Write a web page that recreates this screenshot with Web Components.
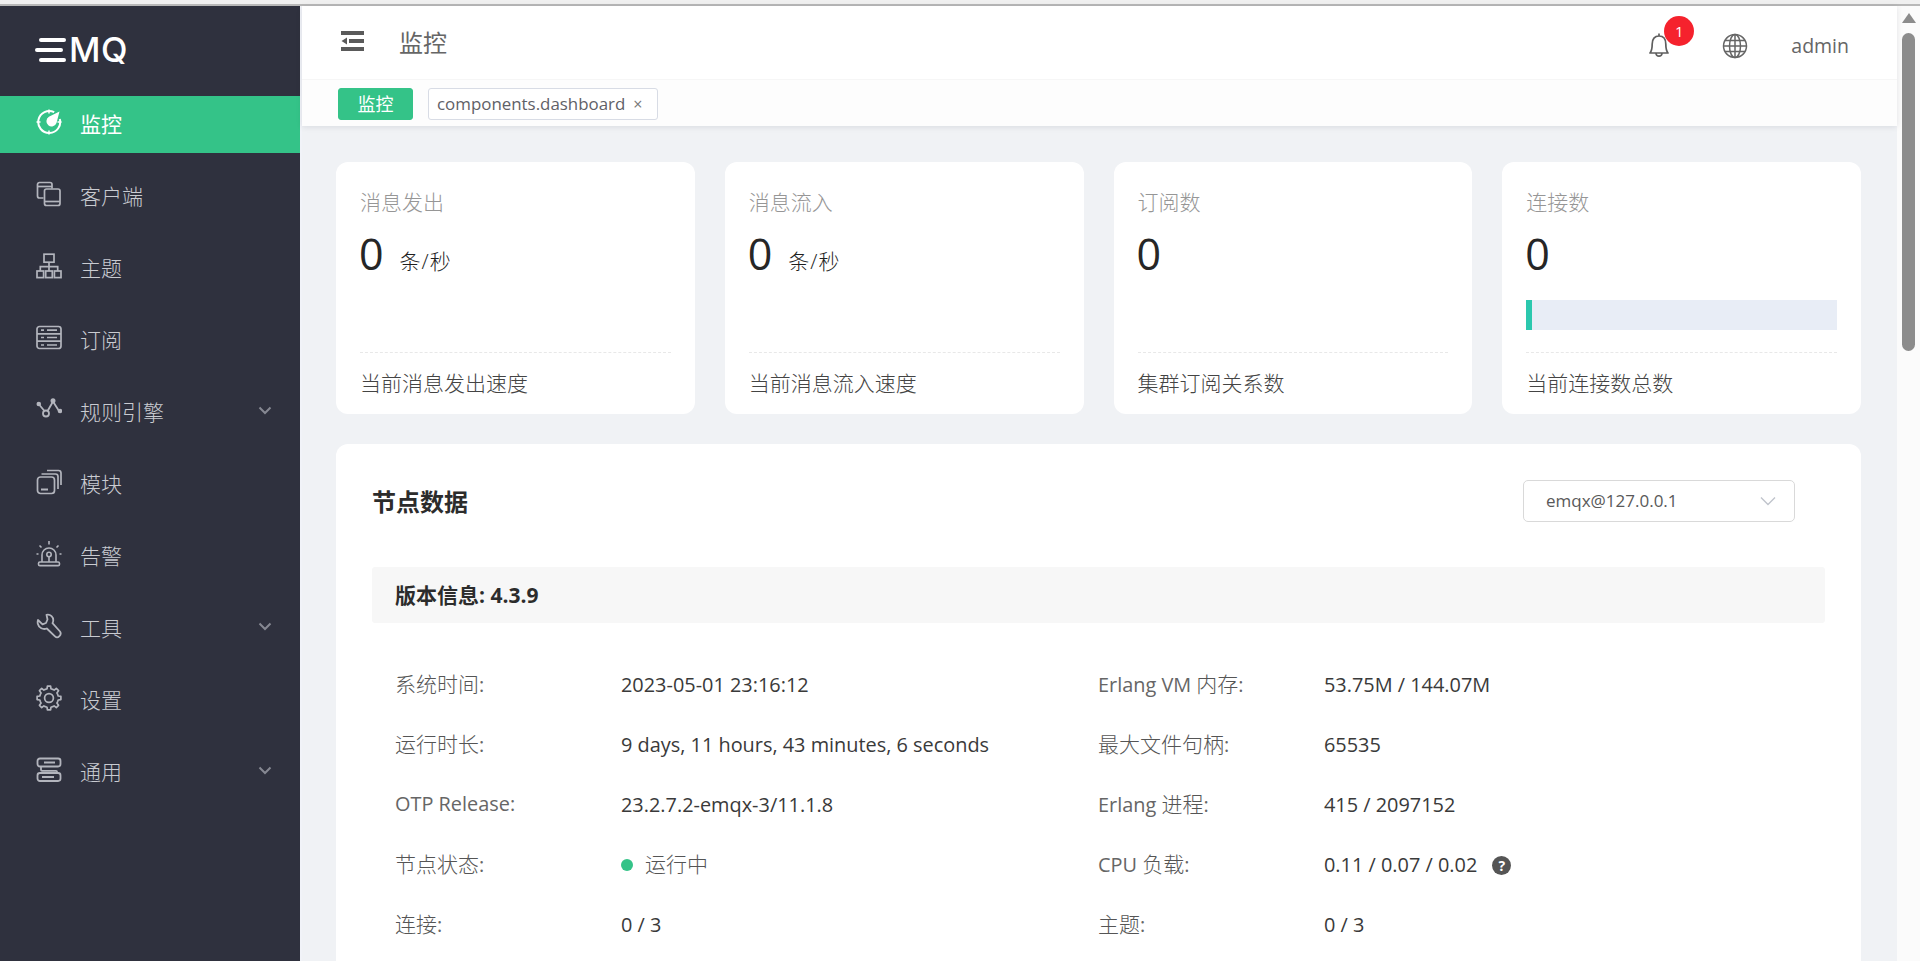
<!DOCTYPE html>
<html lang="zh">
<head>
<meta charset="utf-8">
<title>EMQ Dashboard</title>
<style>
html,body{margin:0;padding:0;height:961px;overflow:hidden;background:#fff;font-family:"Open Sans","Noto Sans CJK SC",sans-serif}
emq-app{display:block}
</style>
</head>
<body>
<emq-app>
  <emq-sidebar slot="side">
    <emq-nav active icon="monitor">监控</emq-nav>
    <emq-nav icon="client">客户端</emq-nav>
    <emq-nav icon="topic">主题</emq-nav>
    <emq-nav icon="sub">订阅</emq-nav>
    <emq-nav icon="rule" chevron>规则引擎</emq-nav>
    <emq-nav icon="module">模块</emq-nav>
    <emq-nav icon="alarm">告警</emq-nav>
    <emq-nav icon="tool" chevron>工具</emq-nav>
    <emq-nav icon="gear">设置</emq-nav>
    <emq-nav icon="general" chevron>通用</emq-nav>
  </emq-sidebar>
  <emq-header slot="head" title-text="监控" user="admin"></emq-header>
  <emq-tabs slot="head">
    <emq-tab active>监控</emq-tab>
    <emq-tab closable>components.dashboard</emq-tab>
  </emq-tabs>
  <emq-stats>
    <emq-stat label="消息发出" value="0" unit="条/秒" foot="当前消息发出速度"></emq-stat>
    <emq-stat label="消息流入" value="0" unit="条/秒" foot="当前消息流入速度"></emq-stat>
    <emq-stat label="订阅数" value="0" foot="集群订阅关系数"></emq-stat>
    <emq-stat label="连接数" value="0" foot="当前连接数总数" progress></emq-stat>
  </emq-stats>
  <emq-panel heading="节点数据" node="emqx@127.0.0.1" version="版本信息: 4.3.9">
    <emq-row label="系统时间:">2023-05-01 23:16:12</emq-row>
    <emq-row label="Erlang VM 内存:">53.75M / 144.07M</emq-row>
    <emq-row label="运行时长:">9 days, 11 hours, 43 minutes, 6 seconds</emq-row>
    <emq-row label="最大文件句柄:">65535</emq-row>
    <emq-row label="OTP Release:">23.2.7.2-emqx-3/11.1.8</emq-row>
    <emq-row label="Erlang 进程:">415 / 2097152</emq-row>
    <emq-row label="节点状态:" status>运行中</emq-row>
    <emq-row label="CPU 负载:" help>0.11 / 0.07 / 0.02</emq-row>
    <emq-row label="连接:">0 / 3</emq-row>
    <emq-row label="主题:">0 / 3</emq-row>
  </emq-panel>
</emq-app>
<script>
const FONT='"Open Sans","Noto Sans CJK SC",sans-serif';
function gearPath(cx,cy,ro,ri,n){
  let d='';
  const st=Math.PI*2/n;
  for(let i=0;i<n;i++){
    const a=i*st-Math.PI/2;
    const pts=[[ri,a-st*.5],[ri,a-st*.27],[ro,a-st*.17],[ro,a+st*.17],[ri,a+st*.27]];
    pts.forEach((p,j)=>{d+=(i===0&&j===0?'M':'L')+(cx+p[0]*Math.cos(p[1])).toFixed(2)+' '+(cy+p[0]*Math.sin(p[1])).toFixed(2)+' ';});
  }
  return d+'Z';
}
const ICONS={
monitor:`<g fill="none" stroke="currentColor" stroke-width="2"><path d="M18.2 3.2A11 11 0 1 0 23.8 10"/><path d="M13 0.5v4M13 21.5v4M0.5 13h4M21.5 13h4" stroke-width="1.5"/></g><path d="M23.5 2.5 20.5 14a5.2 5.2 0 1 1-7.6-6.2Z" fill="currentColor"/>`,
client:`<g fill="none" stroke="currentColor" stroke-width="1.7"><path d="M7.5 17H3.5A2 2 0 0 1 1.5 15V3.5A2 2 0 0 1 3.5 1.5H14A2 2 0 0 1 16 3.5V7.5"/><path d="M1.5 5.5H16"/><rect x="8.5" y="8" width="15.5" height="16.5" rx="2"/><path d="M8.5 20.5H24"/></g>`,
topic:`<g fill="none" stroke="currentColor" stroke-width="1.7"><rect x="8" y="1.2" width="10" height="8" /><rect x="1" y="18" width="6.6" height="6.6" /><rect x="9.7" y="18" width="6.6" height="6.6" /><rect x="18.4" y="18" width="6.6" height="6.6" /><path d="M13 9.2V18M4.3 18V13.6H21.7V18"/></g>`,
sub:`<g fill="none" stroke="currentColor" stroke-width="1.7"><rect x="1" y="1.5" width="24" height="22" rx="2.5"/><path d="M1 8.8H25M1 16.2H25M5 5.2H8M11 5.2H21M5 12.5H8M11 12.5H21M5 20H8M11 20H21"/></g>`,
rule:`<g fill="none" stroke="currentColor" stroke-width="1.8"><path d="M3 7.5 8.5 14M11.3 14.5 17 4.5 23 14"/><circle cx="10" cy="16.5" r="3"/></g><circle cx="2.8" cy="7" r="2.3" fill="currentColor"/><circle cx="17" cy="3.8" r="2.5" fill="currentColor"/><circle cx="24" cy="14" r="2.3" fill="currentColor"/>`,
module:`<g fill="none" stroke="currentColor" stroke-width="1.7"><rect x="1.5" y="8" width="17" height="16.5" rx="3"/><path d="M5.5 5H19.5A2.5 2.5 0 0 1 22 7.5V20"/><path d="M11 1.5H22.5A2.5 2.5 0 0 1 25 4V16"/><path d="M5 20.5H12" stroke-width="2"/></g>`,
alarm:`<g fill="none" stroke="currentColor" stroke-width="1.6"><path d="M6 21V14A7 7 0 0 1 20 14V21"/><rect x="2.5" y="21" width="21" height="3.6" rx="1.4"/><circle cx="13" cy="13.5" r="2.2"/><path d="M13 15.7V21M13 0V3.5M3.5 4.5 5.5 6.5M22.5 4.5 20.5 6.5M0.5 13H2.5M23.5 13H25.5"/></g>`,
tool:`<path fill="none" stroke="currentColor" stroke-width="1.8" stroke-linejoin="round" d="M10.5 1.8C14.5 1 17.7 4 17.2 8C17.1 8.9 16.9 9.5 16.5 10.2L24 18.5C25 20 24.6 22 23.4 23.2C22 24.6 20.2 24.6 19 23.4L10.8 15.5C7 17 2.8 15 1.8 10.8C1.5 9.5 1.6 8.4 2 7L6.5 11.3L10 10L11.5 6.5Z"/>`,
gear:`<g fill="none" stroke="currentColor" stroke-width="1.7" stroke-linejoin="round"><path d="${gearPath(13,13,12,9.4,8)}"/><circle cx="13" cy="13" r="4.4"/></g>`,
general:`<g fill="none" stroke="currentColor" stroke-width="1.8"><rect x="1.5" y="1.5" width="23" height="8" rx="2.4"/><rect x="1.5" y="16" width="23" height="8" rx="2.4"/><path d="M8 5.5H19M6 20H18M5 9.5V12.8A1 1 0 0 0 6 13.8H20A1 1 0 0 1 21 14.8V16"/></g>`
};
function shadow(el,html){const r=el.attachShadow({mode:'open'});r.innerHTML=html;return r;}
const cjk=s=>s.replace(/[\u4e00-\u9fff]+/g,m=>`<span class="c">${m}</span>`);

customElements.define('emq-app',class extends HTMLElement{constructor(){super();shadow(this,`<style>
:host{display:block;width:1920px;height:961px;overflow:hidden;background:#fff}
.strip{height:4px;background:#f0f0f0;border-bottom:2px solid #b8b8b8}
.frame{display:flex;height:955px}
.side{flex:0 0 300px;display:flex}
.right{flex:1 1 auto;min-width:0;display:flex;flex-direction:column;border-left:2px solid #f1f3f8;background:#f0f2f5;position:relative}
.head{flex:none;display:block;position:relative;z-index:1;box-shadow:0 1px 6px rgba(0,21,41,.1)}
.content{flex:1;min-height:0;overflow:hidden;padding:36px 36px 0 34px;display:flex;flex-direction:column;gap:30px}
.bar{flex:0 0 23px;background:#fbfbfb;display:flex;flex-direction:column;align-items:center;padding-top:7px;box-sizing:border-box}
.arrow{width:0;height:0;border-left:7px solid transparent;border-right:7px solid transparent;border-bottom:10px solid #8c8c8c}
.thumb{width:13px;height:318px;background:#8c8c8c;border-radius:7px;margin-top:10px}
</style>
<div class="strip"></div>
<div class="frame">
  <div class="side"><slot name="side"></slot></div>
  <div class="right"><div class="head"><slot name="head"></slot></div><div class="content"><slot></slot></div></div>
  <div class="bar"><div class="arrow"></div><div class="thumb"></div></div>
</div>`);}});

customElements.define('emq-sidebar',class extends HTMLElement{constructor(){super();shadow(this,`<style>
:host{display:flex;flex-direction:column;width:300px;background:#2f313e;height:100%}
.logo{height:90px;display:flex;align-items:center;padding-left:35px;box-sizing:border-box;color:#fff}
.bars{display:flex;flex-direction:column;gap:5.5px;margin-right:3px;margin-top:-2px}
.bars i{display:block;height:4.5px;border-radius:3px;background:#fff}
.mq{font:500 34.5px/1 Inter,"Open Sans",sans-serif;letter-spacing:.4px;margin-top:-2px}
nav{display:flex;flex-direction:column;gap:15px}
</style>
<div class="logo"><div class="bars"><i style="width:27px;margin-left:4px"></i><i style="width:28px"></i><i style="width:27px;margin-left:4px"></i></div><div class="mq">MQ</div></div>
<nav><slot></slot></nav>`);}});

customElements.define('emq-nav',class extends HTMLElement{connectedCallback(){
 if(this.shadowRoot)return;
 shadow(this,`<style>
:host{display:flex;align-items:center;height:57px;padding:0 28px 0 36px;box-sizing:border-box;color:#c9cbd1;font:300 21px/1 ${FONT}}
:host([active]){background:#34c388;color:#fff;font-weight:400}
svg.i{width:26px;height:26px;flex:none;margin:0 18px 5px 0;color:#b3b5bd}
:host([active]) svg.i{color:#fff}
span{flex:1;padding-bottom:1px}
svg.c{width:14px;height:9px;flex:none;margin-bottom:5px;color:#868892}
</style>
<svg class="i" viewBox="0 0 26 26">${ICONS[this.getAttribute('icon')]}</svg><span><slot></slot></span>
${this.hasAttribute('chevron')?'<svg class="c" viewBox="0 0 14 9"><path d="M1.5 1.5 7 7 12.5 1.5" fill="none" stroke="currentColor" stroke-width="2"/></svg>':''}`);
}});

customElements.define('emq-header',class extends HTMLElement{connectedCallback(){
 if(this.shadowRoot)return;
 shadow(this,`<style>
:host{display:flex;align-items:center;height:74px;background:#fff;padding:0 48px 0 39px;color:#666;font:19.5px/1 ${FONT};border-bottom:1px solid #f6f6f6;box-sizing:border-box}
.ham{width:23px;height:20px;flex:none;margin:0 35px 4px 0;color:#5a5a5a}
h1{font:400 24px/1 ${FONT};margin:0;flex:1;color:#666}
.bell{position:relative;width:26px;height:28px;display:block;margin-top:4px;margin-right:50px}
.bell svg{width:26px;height:28px;display:block;color:#5f5f5f}
.badge{position:absolute;left:18px;top:-15px;width:30px;height:30px;border-radius:50%;background:#f5222d;color:#fff;font:15px/30px "Open Sans",sans-serif;text-align:center}
.globe{width:26px;height:26px;color:#666;flex:none;margin:6px 43px 0 0}
.user{margin-top:7px;color:#666}
</style>
<svg class="ham" viewBox="0 0 23 20"><path fill="currentColor" d="M0 0H23V4H0ZM8 8H23V12H8ZM0 16H23V20H0ZM6 6.5V13.5L0.5 10Z"/></svg>
<h1>${this.getAttribute('title-text')}</h1>
<div class="bell"><svg viewBox="0 0 26 28"><path fill="none" stroke="currentColor" stroke-width="1.7" stroke-linejoin="round" d="M4 22C6 19.5 6.2 17 6.2 13C6.2 8 8.6 5 13 5C17.4 5 19.8 8 19.8 13C19.8 17 20 19.5 22 22ZM13 5V2.5M10 22.5C10.4 26 15.6 26 16 22.5"/></svg><div class="badge">1</div></div>
<svg class="globe" viewBox="0 0 26 26"><g fill="none" stroke="currentColor" stroke-width="1.5"><circle cx="13" cy="13" r="11.5"/><ellipse cx="13" cy="13" rx="5.5" ry="11.5"/><path d="M13 1.5V24.5M1.5 13H24.5M3 7.5H23M3 18.5H23"/></g></svg>
<div class="user">${this.getAttribute('user')}</div>`);
}});

customElements.define('emq-tabs',class extends HTMLElement{constructor(){super();shadow(this,`<style>
:host{display:flex;align-items:center;gap:15px;height:46px;background:#fdfdfd;padding:2px 0 0 36px;box-sizing:border-box}
</style><slot></slot>`);}});

customElements.define('emq-tab',class extends HTMLElement{connectedCallback(){
 if(this.shadowRoot)return;
 shadow(this,`<style>
:host{display:inline-flex;align-items:center;height:32px;box-sizing:border-box;border:1px solid #d8dce5;border-radius:3px;background:#fff;color:#5f6167;padding:0 14px 0 8px;font:16.9px/1 ${FONT}}
:host([active]){background:#34c388;border-color:#34c388;color:#fff;width:75px;justify-content:center;padding:0;font-size:18px}
.x{font-size:16px;margin-left:8px;color:#777;line-height:1}
</style><slot></slot>${this.hasAttribute('closable')?'<span class="x">×</span>':''}`);
}});

customElements.define('emq-stats',class extends HTMLElement{constructor(){super();shadow(this,`<style>
:host{display:grid;grid-template-columns:repeat(4,1fr);gap:30px;flex:none}
</style><slot></slot>`);}});

customElements.define('emq-stat',class extends HTMLElement{connectedCallback(){
 if(this.shadowRoot)return;
 const a=n=>this.getAttribute(n);
 shadow(this,`<style>
:host{display:block;background:#fff;border-radius:12px;padding:23px 24px 0;height:252px;box-sizing:border-box;font-family:${FONT}}
.label{font-size:21px;line-height:34px;height:34px;color:#969696;font-weight:300}
.val{height:69px;display:flex;align-items:center;color:#262626}
.num{font:400 43px/1 "Open Sans",sans-serif;color:#262626;margin-left:-1px}
.unit{font-size:21px;margin:12px 0 0 16px;color:#1f1f1f;font-weight:300;letter-spacing:1px}
.area{height:30px;margin:12px 0 22px;display:flex}
.area.p{background:#e8edf6}
.area.p i{display:block;width:6px;background:#2bc8ae}
.foot{border-top:1px dashed #e8e8e8;height:61px;line-height:61px;font-size:21px;color:#444;font-weight:300}
</style>
<div class="label">${a('label')}</div>
<div class="val"><span class="num">${a('value')}</span>${a('unit')?`<span class="unit">${a('unit')}</span>`:''}</div>
<div class="area${this.hasAttribute('progress')?' p':''}">${this.hasAttribute('progress')?'<i></i>':''}</div>
<div class="foot">${a('foot')}</div>`);
}});

customElements.define('emq-panel',class extends HTMLElement{connectedCallback(){
 if(this.shadowRoot)return;
 const a=n=>this.getAttribute(n);
 shadow(this,`<style>
:host{display:block;background:#fff;border-radius:12px 12px 0 0;padding:36px 36px 30px;box-sizing:border-box;font-family:${FONT};flex:none}
.top{display:flex;align-items:center;height:41px;padding-right:30px}
h2{flex:1;margin:3px 0 0;font:700 24px/1 ${FONT};color:#2c2c2c}
.sel{width:272px;height:42px;box-sizing:border-box;border:1px solid #d9d9d9;border-radius:5px;display:flex;align-items:center;padding:0 18px 0 22px;color:#595959;font-size:17px}
.sel span{flex:1}
.sel svg{width:16px;height:10px;color:#c0c4cc}
.ver{margin-top:46px;height:56px;background:#f7f7f7;border-radius:3px;padding-left:23px;display:flex;align-items:center;font:700 21px/1 ${FONT};color:#2c2c2c}
.grid{margin-top:32px;display:grid;grid-template-columns:703px 1fr;grid-auto-rows:60px;padding-left:23px}
</style>
<div class="top"><h2>${a('heading')}</h2><div class="sel"><span>${a('node')}</span><svg viewBox="0 0 16 10"><path d="M1 1.5 8 8.5 15 1.5" fill="none" stroke="currentColor" stroke-width="1.4"/></svg></div></div>
<div class="ver">${a('version')}</div>
<div class="grid"><slot></slot></div>`);
}});

customElements.define('emq-row',class extends HTMLElement{connectedCallback(){
 if(this.shadowRoot)return;
 const st=this.hasAttribute('status'),h=this.hasAttribute('help');
 shadow(this,`<style>
:host{display:flex;align-items:center;font:19.9px/1 ${FONT};color:#666}
.l{width:226px;flex:none;white-space:nowrap;margin-bottom:2px}
.c{font-size:21px;font-weight:300;color:#555}
.v{color:#3a3a3a;display:flex;align-items:center;white-space:nowrap}
.v.st{font-size:21px;font-weight:300;color:#555;margin-bottom:1px}
.dot{width:12px;height:12px;border-radius:50%;background:#34c388;margin-right:12px}
.help{width:19px;height:19px;border-radius:50%;background:#555;color:#fff;font:700 14px/19px "Open Sans",sans-serif;text-align:center;margin-left:15px}
</style>
<div class="l">${cjk(this.getAttribute('label'))}</div>
<div class="v${st?' st':''}">${st?'<i class="dot"></i>':''}<slot></slot>${h?'<span class="help">?</span>':''}</div>`);
}});
</script>
</body>
</html>
